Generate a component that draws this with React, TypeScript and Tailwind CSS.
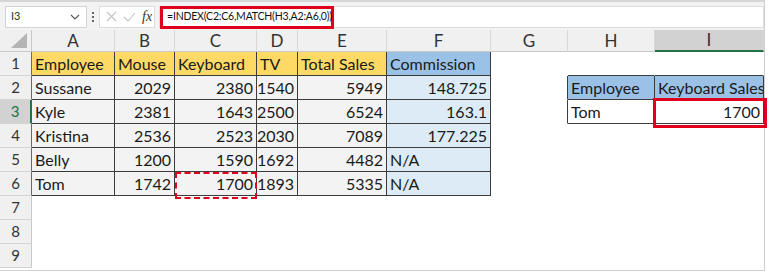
import React from 'react';

const colWidths = ['w-[83px]', 'w-[60px]', 'w-[82px]', 'w-[41px]', 'w-[89px]', 'w-[104px]', 'w-[77px]', 'w-[87px]', 'w-[109px]'];
const letters = ['A', 'B', 'C', 'D', 'E', 'F', 'G', 'H', 'I'];

const main = [
  ['Employee', 'Mouse', 'Keyboard', 'TV', 'Total Sales', 'Commission'],
  ['Sussane', '2029', '2380', '1540', '5949', '148.725'],
  ['Kyle', '2381', '1643', '2500', '6524', '163.1'],
  ['Kristina', '2536', '2523', '2030', '7089', '177.225'],
  ['Belly', '1200', '1590', '1692', '4482', 'N/A'],
  ['Tom', '1742', '1700', '1893', '5335', 'N/A'],
];

const inTable = (r: number, c: number) =>
  (r >= 1 && r <= 6 && c >= 0 && c <= 5) || (r >= 2 && r <= 3 && c >= 7 && c <= 8);

const cellText = (r: number, c: number) => {
  if (r >= 1 && r <= 6 && c <= 5) return main[r - 1][c];
  if (r === 2 && c === 7) return 'Employee';
  if (r === 2 && c === 8) return 'Keyboard Sales';
  if (r === 3 && c === 7) return 'Tom';
  if (r === 3 && c === 8) return '1700';
  return '';
};

const cellBg = (r: number, c: number) => {
  if (r === 1 && c <= 4) return 'bg-[#ffd966]';
  if (r === 1 && c === 5) return 'bg-[#9bc2e6]';
  if (r >= 2 && r <= 6 && c === 5) return 'bg-[#ddebf7]';
  if (r >= 2 && r <= 6 && c <= 4) return 'bg-[#f3f3f3]';
  if (r === 2 && c >= 7) return 'bg-[#9bc2e6]';
  return 'bg-white';
};

const Cell = ({ r, c }: { r: number; c: number }) => {
  const text = cellText(r, c);
  const numeric = /^[0-9.]+$/.test(text);
  const right = inTable(r, c) || inTable(r, c + 1) ? 'border-r-[#3c3c3c]' : 'border-r-transparent';
  const bottom = inTable(r, c) || inTable(r + 1, c) ? 'border-b-[#3c3c3c]' : 'border-b-transparent';
  return (
    <div
      className={`${colWidths[c]} h-full shrink-0 border-r border-b ${right} ${bottom} ${cellBg(r, c)} flex items-center overflow-hidden whitespace-nowrap px-[3px] ${
        numeric ? 'justify-end' : 'justify-start'
      }`}
    >
      {text}
    </div>
  );
};

const FormulaBar = () => (
  <div className="h-[30px] bg-[#f3f3f3] border-t-2 border-[#d6d6d6] flex items-center pl-[5px] pt-[1px]">
    <div className="w-[82px] h-[22px] bg-white border border-[#d4d4d4] flex items-center justify-between pl-[5px] pr-[6px] text-[11px] text-[#333]">
      <span>I3</span>
      <svg width="10" height="6" viewBox="0 0 10 6" fill="none" stroke="#555" strokeWidth="1.1">
        <path d="M1 1l4 4 4-4" />
      </svg>
    </div>
    <div className="w-[10px] flex flex-col items-center gap-[2px] ml-[1px]">
      <span className="w-[2px] h-[2px] bg-[#666]" />
      <span className="w-[2px] h-[2px] bg-[#666]" />
      <span className="w-[2px] h-[2px] bg-[#666]" />
    </div>
    <div className="ml-[1px] w-[56px] h-[22px] bg-white border border-[#dcdcdc] flex items-center pl-[6px] gap-[6px]">
      <svg width="11" height="11" viewBox="0 0 11 11" stroke="#c3c3c3" strokeWidth="1.1">
        <path d="M1 1l9 9M10 1l-9 9" />
      </svg>
      <svg width="13" height="10" viewBox="0 0 13 10" fill="none" stroke="#c3c3c3" strokeWidth="1.1">
        <path d="M1 5l4 4 7-8" />
      </svg>
      <span className="text-[14px] italic text-[#333] leading-none" style={{ fontFamily: '"Liberation Serif", serif' }}>
        fx
      </span>
    </div>
    <div className="ml-[4px] flex-1 h-[22px] bg-white border border-[#dcdcdc] relative">
      <div className="absolute left-[0px] top-[-1px] w-[174px] h-[23px] border-[3px] border-[#e0001b] flex items-center pl-[4px] text-[10.5px] tracking-[-0.2px] text-[#111] whitespace-nowrap">
        =INDEX(C2:C6,MATCH(H3,A2:A6,0))
      </div>
    </div>
  </div>
);

export default function App() {
  return (
    <div
      className="w-[768px] h-[271px] bg-white overflow-hidden text-[#1a1a1a]"
      style={{ fontFamily: 'Lato, "Open Sans", sans-serif' }}
    >
      <div className="w-[765px] h-[271px] border-r border-b border-[#cfcfcf]">
        <FormulaBar />
        <div className="relative">
          <div className="flex h-[22px] text-[17px] text-[#333]">
            <div className="w-[32px] h-full shrink-0 bg-[#f0f0f0] border-r border-b border-[#c8c8c8] relative">
              <svg className="absolute right-[4px] bottom-[3px]" width="16" height="15" viewBox="0 0 16 15">
                <path d="M16 0V15H0Z" fill="#b5b5b5" />
              </svg>
            </div>
            {letters.map((l, c) => (
              <div
                key={l}
                className={`${colWidths[c]} h-full shrink-0 flex items-center justify-center ${
                  c === 8 ? 'bg-[#d2d2d2] border-b-2 border-b-[#217346]' : 'bg-[#f0f0f0] border-b border-b-[#c8c8c8]'
                } border-r border-r-[#d8d8d8]`}
              >
                {l}
              </div>
            ))}
          </div>
          {Array.from({ length: 9 }, (_, i) => i + 1).map((r) => (
            <div key={r} className="flex h-[24px] text-[16px]">
              <div
                className={`w-[32px] h-full shrink-0 flex items-center justify-center text-[15px] border-b border-b-[#d4d4d4] ${
                  r === 3
                    ? 'bg-[#d2d2d2] text-[#217346] border-r-2 border-r-[#217346]'
                    : r <= 6
                    ? 'bg-[#f0f0f0] text-[#333] border-r border-r-[#6a6a6a]'
                    : 'bg-[#f0f0f0] text-[#333] border-r border-r-[#c8c8c8]'
                }`}
              >
                {r}
              </div>
              {letters.map((l, c) => (
                <Cell key={l} r={r} c={c} />
              ))}
            </div>
          ))}
          <div className="absolute left-[175px] top-[142px] w-[82px] h-[27px] border-2 border-dashed border-[#e0001b]" />
          <div className="absolute left-[653px] top-[68px] w-[114px] h-[30px] border-[3px] border-[#e0001b]" />
        </div>
      </div>
    </div>
  );
}
